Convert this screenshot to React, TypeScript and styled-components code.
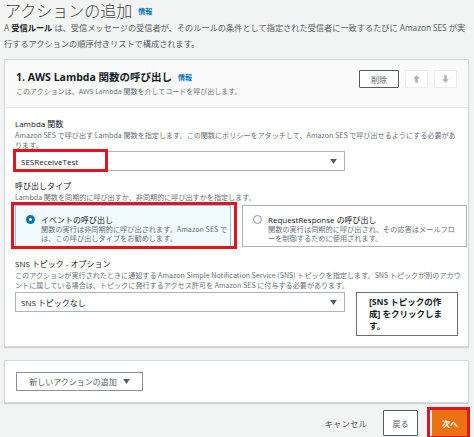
import React from 'react';
import styled, { createGlobalStyle } from 'styled-components';

const GlobalStyle = createGlobalStyle`
  html, body {
    margin: 0;
    padding: 0;
    background: #f2f3f3;
  }
  body {
    font-family: "Open Sans", "Noto Sans CJK JP", sans-serif;
    color: #16191f;
  }
  * {
    box-sizing: border-box;
  }
`;

const ArrowIcon = ({ down }: { down?: boolean }) => (
  <svg width="7" height="8" viewBox="0 0 10 11" style={{ transform: down ? 'rotate(180deg)' : undefined }}>
    <path d="M5 0 L10 5 H7 V11 H3 V5 H0 Z" fill="#aab7b8" />
  </svg>
);

const Caret = () => (
  <svg width="7" height="5" viewBox="0 0 8 6">
    <path d="M0 0 H8 L4 6 Z" fill="#545b64" />
  </svg>
);

const App = () => {
  return (
    <>
      <GlobalStyle />
      <PageContainer>
        <TitleRow>
          <Title>アクションの追加</Title>
          <InfoLink>情報</InfoLink>
        </TitleRow>
        <Intro>
          A <b>受信ルール</b> は、受信メッセージの受信者が、そのルールの条件として指定された受信者に一致するたびに Amazon SES が実行するアクションの順序付きリストで構成されます。
        </Intro>

        <Panel>
          <PanelHeader>
            <div>
              <PanelTitle>
                1. AWS Lambda 関数の呼び出し<InfoLink>情報</InfoLink>
              </PanelTitle>
              <PanelSub>このアクションは、AWS Lambda 関数を介してコードを呼び出します。</PanelSub>
            </div>
            <HeaderActions>
              <OutlineButton>削除</OutlineButton>
              <IconButton aria-label="上へ">
                <ArrowIcon />
              </IconButton>
              <IconButton aria-label="下へ">
                <ArrowIcon down />
              </IconButton>
            </HeaderActions>
          </PanelHeader>

          <PanelBody>
            <Label>Lambda 関数</Label>
            <Description>
              Amazon SES で呼び出す Lambda 関数を指定します。この関数にポリシーをアタッチして、Amazon SES で呼び出せるようにする必要があります。
            </Description>
            <SelectWrap>
              <Select>
                <span>SESReceiveTest</span>
                <Caret />
              </Select>
              <SelectMark />
            </SelectWrap>

            <Label $gap={9}>呼び出しタイプ</Label>
            <Description>Lambda 関数を同期的に呼び出すか、非同期的に呼び出すかを指定します。</Description>
            <CardGrid>
              <Card $selected $marked $padRight={2}>
                <Radio $checked />
                <div>
                  <CardTitle>イベントの呼び出し</CardTitle>
                  <CardText>関数の実行は非同期的に呼び出されます。Amazon SES では、この呼び出しタイプをお勧めします。</CardText>
                </div>
              </Card>
              <Card $padRight={8}>
                <Radio />
                <div>
                  <CardTitle>RequestResponse の呼び出し</CardTitle>
                  <CardText>関数の実行は同期的に呼び出され、その応答はメールフローを制御するために使用されます。</CardText>
                </div>
              </Card>
            </CardGrid>

            <Label $gap={11}>SNS トピック - オプション</Label>
            <Description>
              このアクションが実行されたときに通知する Amazon Simple Notification Service (SNS) トピックを指定します。SNS トピックが別のアカウントに属している場合は、トピックに発行するアクセス許可を Amazon SES に付与する必要があります。
            </Description>
            <SnsRow>
              <Select>
                <span>SNS トピックなし</span>
                <Caret />
              </Select>
              <Hint>[SNS トピックの作成] をクリックします。</Hint>
            </SnsRow>
          </PanelBody>
        </Panel>

        <AddPanel>
          <AddButton>
            新しいアクションの追加 <Caret />
          </AddButton>
        </AddPanel>

        <Footer>
          <TextButton>キャンセル</TextButton>
          <OutlineButton $large>戻る</OutlineButton>
          <PrimaryWrap>
            <PrimaryButton>次へ</PrimaryButton>
          </PrimaryWrap>
        </Footer>
      </PageContainer>
    </>
  );
};

const PageContainer = styled.div`
  width: 474px;
  height: 437px;
  overflow: hidden;
  padding: 2px 5px 0 4px;
`;

const TitleRow = styled.div`
  display: flex;
  align-items: center;
  height: 18px;
  padding-left: 1px;
`;

const Title = styled.h1`
  margin: 0;
  font-size: 16px;
  font-weight: 300;
  line-height: 18px;
  color: #444;
`;

const InfoLink = styled.span`
  margin-left: 6px;
  font-size: 7px;
  font-weight: 700;
  color: #0073bb;
  vertical-align: middle;
`;

const Intro = styled.p`
  margin: 0;
  font-size: 8.2px;
  line-height: 16px;
  color: #545b64;

  b {
    color: #16191f;
  }
`;

const Panel = styled.section`
  margin-top: 7px;
  width: 465px;
  background: #fff;
  border: 1px solid #d5dbdb;
  box-shadow: 0 1px 1px rgba(0, 28, 36, 0.15);
`;

const PanelHeader = styled.div`
  display: flex;
  justify-content: space-between;
  height: 48px;
  padding: 9px 11px 0 11px;
  background: #fafafa;
  border-bottom: 1px solid #eaeded;
`;

const PanelTitle = styled.h2`
  margin: 0;
  font-size: 10.5px;
  font-weight: 700;
  line-height: 16px;
`;

const PanelSub = styled.div`
  font-size: 7px;
  line-height: 12px;
  color: #687078;
`;

const HeaderActions = styled.div`
  display: flex;
  gap: 6px;
  padding-top: 1px;
`;

const OutlineButton = styled.button<{ $large?: boolean }>`
  height: ${(p) => (p.$large ? 26 : 18)}px;
  width: ${(p) => (p.$large ? 35 : 40)}px;
  padding: 0;
  background: #fff;
  border: 1px solid #545b64;
  border-radius: 1px;
  font-family: inherit;
  font-size: 8px;
  color: #545b64;
`;

const IconButton = styled.button`
  display: flex;
  align-items: center;
  justify-content: center;
  width: 23px;
  height: 18px;
  padding: 0;
  background: #fff;
  border: 1px solid #eaeded;
  border-radius: 1px;
`;

const PanelBody = styled.div`
  padding: 10px 1px 10px 10px;
`;

const Label = styled.div<{ $gap?: number }>`
  margin-top: ${(p) => p.$gap ?? 0}px;
  font-size: 8px;
  line-height: 12px;
  color: #16191f;
`;

const Description = styled.div`
  max-width: 447px;
  font-family: "Noto Sans CJK JP", sans-serif;
  font-size: 7.1px;
  line-height: 10px;
  color: #687078;
`;

const SelectWrap = styled.div`
  position: relative;
  margin-top: 1px;
  width: 330px;
`;

const Select = styled.div`
  display: flex;
  align-items: center;
  justify-content: space-between;
  width: 330px;
  height: 20px;
  padding: 0 7px 0 5px;
  background: #fff;
  border: 1px solid #aab7b8;
  font-size: 8px;
  color: #16191f;
`;

const SelectMark = styled.div`
  position: absolute;
  left: -2px;
  top: -2px;
  width: 95px;
  bottom: -1px;
  border: 3px solid #e0151f;
  pointer-events: none;
`;

const CardGrid = styled.div`
  display: grid;
  grid-template-columns: 216px 225px;
  gap: 11px;
  margin-top: 3px;
`;

const Card = styled.div<{ $selected?: boolean; $marked?: boolean; $padRight: number }>`
  position: relative;
  display: flex;
  gap: 6px;
  height: 42px;
  padding: 8px ${(p) => p.$padRight}px 0 10px;
  background: ${(p) => (p.$selected ? '#f1faff' : '#fff')};
  border: 1px solid ${(p) => (p.$selected ? '#8ec7e6' : '#aab7b8')};

  &::after {
    content: '';
    display: ${(p) => (p.$marked ? 'block' : 'none')};
    position: absolute;
    left: -5px;
    top: -4px;
    right: -7px;
    bottom: -3px;
    border: 3px solid #e0151f;
  }
`;

const Radio = styled.span<{ $checked?: boolean }>`
  flex: none;
  width: 9px;
  height: 9px;
  margin-top: 1px;
  border-radius: 50%;
  background: #fff;
  border: ${(p) => (p.$checked ? '3px solid #0073bb' : '1px solid #879596')};
`;

const CardTitle = styled.div`
  font-size: 8px;
  line-height: 11px;
  color: #16191f;
`;

const CardText = styled.div`
  font-family: "Noto Sans CJK JP", sans-serif;
  font-size: 7.2px;
  line-height: 9px;
  color: #687078;
`;

const SnsRow = styled.div`
  display: flex;
  align-items: flex-start;
  gap: 11px;
  margin-top: 2px;
`;

const Hint = styled.div`
  width: 102px;
  padding: 3px 14px 3px 12px;
  background: #fff;
  border: 1px solid #687078;
  font-size: 8.5px;
  font-weight: 700;
  line-height: 12px;
  color: #16191f;
`;

const AddPanel = styled.section`
  margin-top: 13px;
  width: 465px;
  padding: 11px;
  background: #fff;
  border: 1px solid #d5dbdb;
  box-shadow: 0 1px 1px rgba(0, 28, 36, 0.15);
`;

const AddButton = styled.button`
  display: flex;
  align-items: center;
  justify-content: center;
  gap: 6px;
  width: 127px;
  height: 19px;
  padding: 0;
  background: #fff;
  border: 1px solid #879596;
  font-family: inherit;
  font-size: 8px;
  color: #545b64;
`;

const Footer = styled.div`
  display: flex;
  justify-content: flex-end;
  align-items: center;
  gap: 14px;
  margin-top: 7px;
  padding-right: 1px;
`;

const TextButton = styled.span`
  margin-right: 2px;
  font-size: 8.5px;
  color: #545b64;
`;

const PrimaryWrap = styled.div`
  position: relative;

  &::after {
    content: '';
    position: absolute;
    left: -5px;
    top: -3px;
    right: -2px;
    bottom: -3px;
    border: 3px solid #e0151f;
  }
`;

const PrimaryButton = styled.button`
  display: block;
  width: 36px;
  height: 26px;
  padding: 0;
  background: #ec7211;
  border: 1px solid #ec7211;
  font-family: inherit;
  font-size: 8px;
  font-weight: 700;
  color: #fff;
`;

export default App;
